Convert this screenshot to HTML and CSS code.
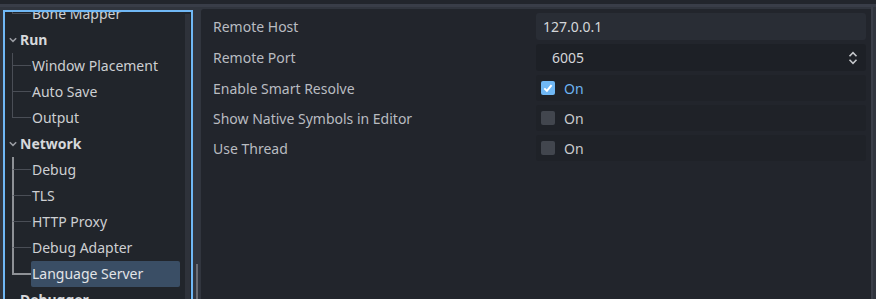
FILE: index.html
```html
<!DOCTYPE html>
<html lang="en">
<head>
<meta charset="UTF-8">
<title>Project Settings - Network</title>
<link rel="stylesheet" href="styles.css">
</head>
<body>

<!-- top edge of the tab bar -->
<div class="topbar"></div>

<div class="main">
  <!-- section tree -->
  <div class="sidebar">
    <div class="tree">
      <div class="item child last"><span class="conn"><span class="c-top"></span><span class="c-bot"></span></span><span class="label">Bone Mapper</span></div>

      <div class="item cat">
        <svg class="chev" width="8" height="6" viewBox="0 0 8 6"><path d="M0.8 1.2 L4 4.4 L7.2 1.2" fill="none" stroke="#9a9da3" stroke-width="1.5"/></svg>
        <span class="label">Run</span>
      </div>
      <div class="item child"><span class="conn"><span class="c-top"></span><span class="c-bot"></span></span><span class="label">Window Placement</span></div>
      <div class="item child"><span class="conn"><span class="c-top"></span><span class="c-bot"></span></span><span class="label">Auto Save</span></div>
      <div class="item child last"><span class="conn"><span class="c-top"></span><span class="c-bot"></span></span><span class="label">Output</span></div>

      <div class="item cat">
        <svg class="chev" width="8" height="6" viewBox="0 0 8 6"><path d="M0.8 1.2 L4 4.4 L7.2 1.2" fill="none" stroke="#9a9da3" stroke-width="1.5"/></svg>
        <span class="label">Network</span>
      </div>
      <div class="item child hl"><span class="conn"><span class="c-top"></span><span class="c-bot"></span></span><span class="label">Debug</span></div>
      <div class="item child hl"><span class="conn"><span class="c-top"></span><span class="c-bot"></span></span><span class="label">TLS</span></div>
      <div class="item child hl"><span class="conn"><span class="c-top"></span><span class="c-bot"></span></span><span class="label">HTTP Proxy</span></div>
      <div class="item child hl"><span class="conn"><span class="c-top"></span><span class="c-bot"></span></span><span class="label">Debug Adapter</span></div>
      <div class="item child hl last selected"><span class="conn"><span class="c-top"></span><span class="c-bot"></span></span><span class="label">Language Server</span></div>

      <div class="item cat nochev">
        <span class="label">Debugger</span>
      </div>
    </div>
    <div class="track"></div>
  </div>

  <!-- outer scrollbar -->
  <div class="gap">
    <div class="thumb"></div>
  </div>

  <!-- inspector -->
  <div class="inspector">
    <div class="prop">
      <span class="name">Remote Host</span>
      <div class="field line-edit">127.0.0.1</div>
    </div>
    <div class="prop">
      <span class="name">Remote Port</span>
      <div class="field spin">
        <span class="spin-value">6005</span>
        <svg class="updown" width="10" height="14" viewBox="0 0 10 14"><path d="M1.5 5.2 L5 1.7 L8.5 5.2 M1.5 8.8 L5 12.3 L8.5 8.8" fill="none" stroke="#c5c7cb" stroke-width="1.6"/></svg>
      </div>
    </div>
    <div class="prop short">
      <span class="name">Enable Smart Resolve</span>
      <div class="field check on">
        <span class="box"><svg width="14" height="14" viewBox="0 0 14 14"><path d="M3.3 7.4 L5.9 9.9 L10.6 4.2" fill="none" stroke="#ffffff" stroke-width="2"/></svg></span>
        <span class="check-label">On</span>
      </div>
    </div>
    <div class="prop short">
      <span class="name">Show Native Symbols in Editor</span>
      <div class="field check">
        <span class="box"></span>
        <span class="check-label">On</span>
      </div>
    </div>
    <div class="prop short">
      <span class="name">Use Thread</span>
      <div class="field check">
        <span class="box"></span>
        <span class="check-label">On</span>
      </div>
    </div>
  </div>

  <div class="edge"></div>
</div>

</body>
</html>
```

FILE: styles.css
```css
/* base */
body {
  margin: 0;
  width: 876px;
  height: 299px;
  overflow: hidden;
  background-color: #31353e;
  font-family: "Noto Sans", "Open Sans", sans-serif;
  font-size: 14px;
  color: #cdcfd2;
}

.topbar {
  height: 4px;
  background-color: #22252c;
  border-bottom: 3px solid #393d48;
}

.main {
  display: flex;
  align-items: flex-start;
  padding-top: 2px;
  padding-left: 3px;
}

/* tree on the left */
.sidebar {
  display: flex;
  width: 186px;
  height: 300px;
  margin-top: 1px;
  border: 2px solid #70b8f5;
  border-bottom: none;
  background-color: #21252b;
  overflow: hidden;
}

.tree {
  flex: 1;
  margin-top: -11px;
}

.track {
  width: 5px;
  margin-right: 1px;
  margin-top: 2px;
  background-color: #2e323a;
}

.item {
  display: flex;
  align-items: center;
  height: 26px;
  white-space: nowrap;
}

.cat .label {
  font-weight: bold;
  color: #d6d8db;
  padding-bottom: 2px;
}

.chev {
  margin-left: 4px;
  margin-right: 3px;
}

.nochev .label {
  margin-left: 15px;
}

/* relationship lines */
.conn {
  align-self: stretch;
  display: flex;
  flex-direction: column;
  width: 19px;
  margin-left: 7px;
  flex-shrink: 0;
}

.c-top {
  height: 13px;
  box-sizing: border-box;
  border-left: 1px solid #4a4e56;
  border-bottom: 1px solid #4a4e56;
}

.c-bot {
  flex: 1;
  border-left: 1px solid #4a4e56;
}

.last .c-bot {
  border-left-color: transparent;
}

.hl .c-top {
  border-left: 2px solid #8e9196;
}

.hl .c-bot {
  border-left: 2px solid #8e9196;
}

.hl.last .c-bot {
  border-left-color: transparent;
}

.selected .c-top {
  height: 14px;
  border-bottom: 2px solid #8e9196;
}

.child .label {
  flex: 1;
  height: 26px;
  line-height: 26px;
  padding-left: 1px;
  margin-right: 5px;
  border-radius: 2px;
}

.selected .label {
  background-color: #3a4e65;
  color: #e2e4e7;
}

/* little scrollbar between the panels */
.gap {
  width: 8px;
  height: 300px;
  flex-shrink: 0;
}

.thumb {
  width: 2px;
  height: 60px;
  margin-left: 3px;
  margin-top: 255px;
  background-color: #6a6d74;
}

/* inspector on the right */
.inspector {
  width: 653px;
  height: 300px;
  padding: 4px 5px 0 12px;
  background-color: #22252c;
  border-top-left-radius: 3px;
  display: flex;
  flex-direction: column;
  gap: 4px;
}

.prop {
  display: grid;
  grid-template-columns: 323px 330px;
  align-items: center;
  height: 27px;
}

.prop.short {
  height: 26px;
}

.name {
  color: #b9bcc1;
}

.field {
  height: 100%;
  box-sizing: border-box;
  border-radius: 3px;
  display: flex;
  align-items: center;
  color: #d4d6d9;
}

.line-edit {
  background-color: #292d35;
  padding-left: 7px;
}

.spin {
  background-color: #1d2026;
  padding-left: 16px;
  padding-right: 8px;
}

.spin-value {
  flex: 1;
}

.check {
  background-color: #1f2228;
  padding-left: 5px;
}

.box {
  width: 14px;
  height: 14px;
  border-radius: 2px;
  background-color: #42464e;
  margin-right: 9px;
  display: flex;
}

.on .box {
  background-color: #70b8f5;
}

.check-label {
  color: #c9cbce;
}

.on .check-label {
  color: #6db3f1;
}

.edge {
  width: 2px;
  height: 300px;
  margin-top: -2px;
  background-color: #3b3f49;
}
```
